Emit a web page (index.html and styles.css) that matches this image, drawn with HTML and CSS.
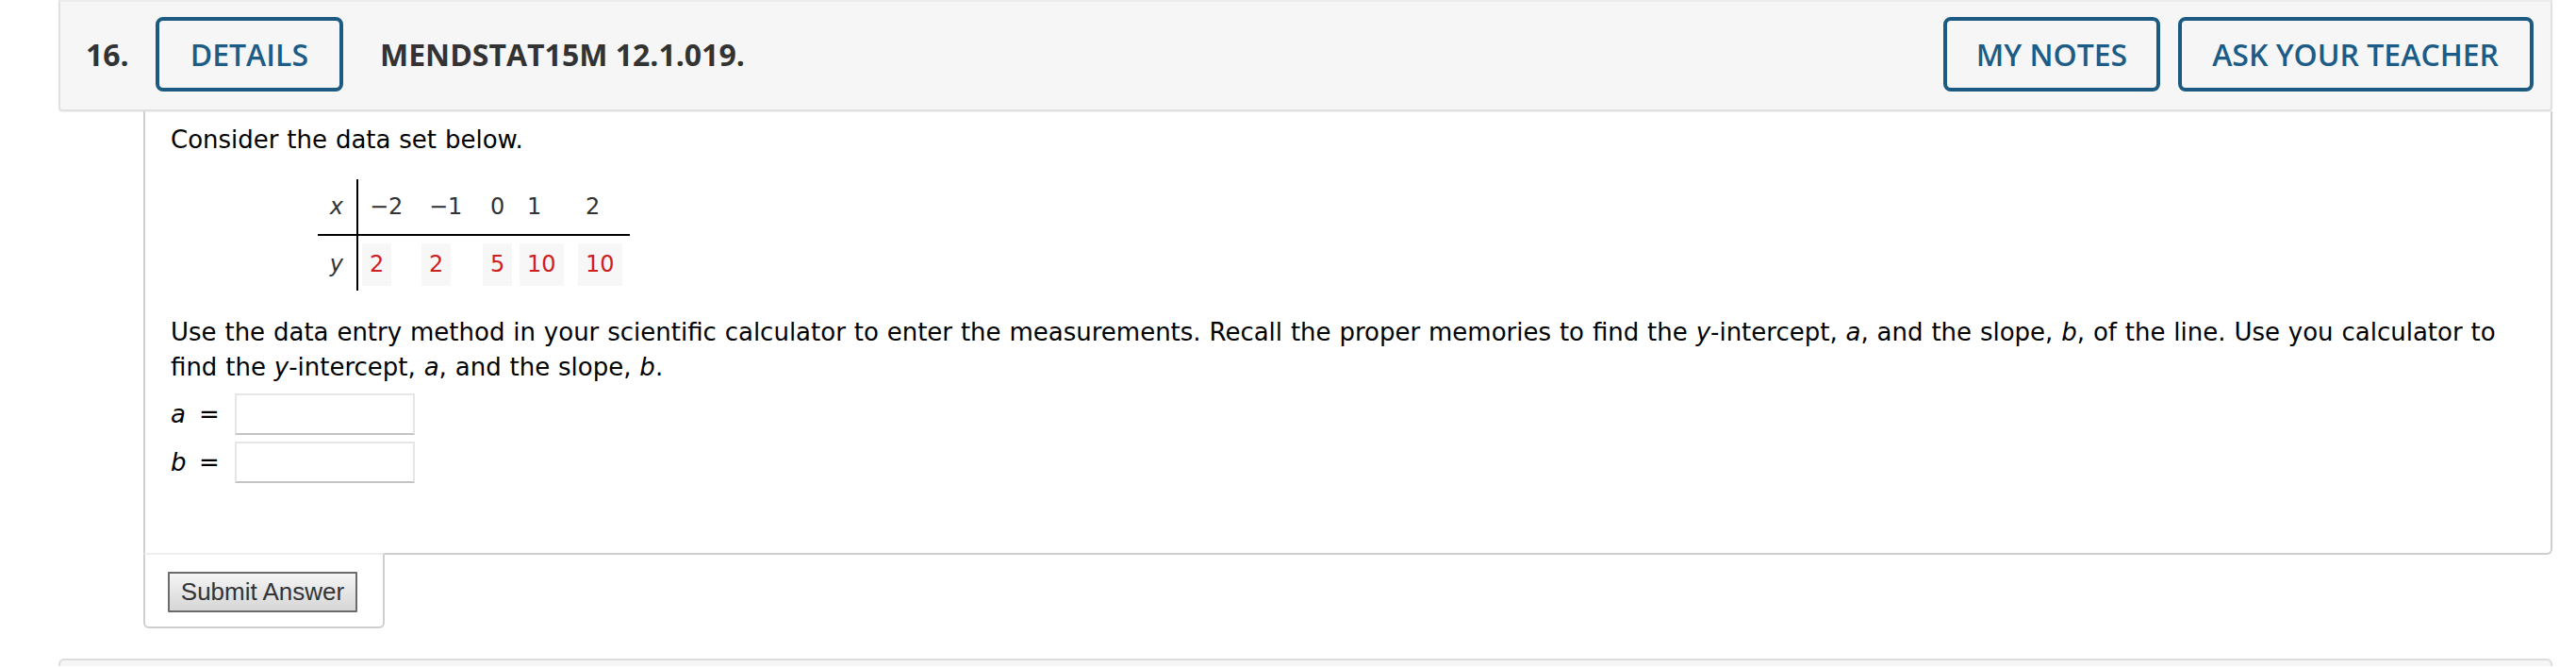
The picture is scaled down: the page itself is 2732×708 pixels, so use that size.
FILE: index.html
```html
<!DOCTYPE html>
<html lang="en">
<head>
<meta charset="utf-8">
<title>MENDSTAT15M 12.1.019.</title>
<link rel="stylesheet" href="styles.css">
</head>
<body>
<div class="page">
  <div class="qhead">
    <span class="qnum">16.</span>
    <button class="hbtn">DETAILS</button>
    <span class="qtitle">MENDSTAT15M 12.1.019.</span>
    <span class="spacer"></span>
    <button class="hbtn hbtn-notes">MY NOTES</button>
    <button class="hbtn hbtn-gap">ASK YOUR TEACHER</button>
  </div>
  <div class="qbody">
    <p class="intro">Consider the data set below.</p>
    <div class="dtable">
      <div class="lab top"><span class="v"><i>x</i></span></div>
      <div class="cell top c1"><span class="v">−2</span></div>
      <div class="cell top"><span class="v">−1</span></div>
      <div class="cell top"><span class="v">0</span></div>
      <div class="cell top"><span class="v">1</span></div>
      <div class="cell top"><span class="v">2</span></div>
      <div class="lab bot"><span class="v"><i>y</i></span></div>
      <div class="cell bot c1"><span class="v ans">2</span></div>
      <div class="cell bot"><span class="v ans">2</span></div>
      <div class="cell bot"><span class="v ans">5</span></div>
      <div class="cell bot"><span class="v ans">10</span></div>
      <div class="cell bot"><span class="v ans">10</span></div>
    </div>
    <p class="instr">Use the data entry method in your scientific calculator to enter the measurements. Recall the proper memories to find the <i>y</i>-intercept, <i>a</i>, and the slope, <i>b</i>, of the line. Use you calculator to find the <i>y</i>-intercept, <i>a</i>, and the slope, <i>b</i>.</p>
    <div class="ansrow"><span class="var"><i>a</i></span><span class="eq">=</span><input class="inp" type="text"></div>
    <div class="ansrow ansrow-2"><span class="var"><i>b</i></span><span class="eq">=</span><input class="inp" type="text"></div>
  </div>
  <div class="submit-tab"><button class="submit">Submit Answer</button></div>
  <div class="nextq"></div>
</div>
</body>
</html>
```
FILE: styles.css
```css
html, body {
  margin: 0;
  padding: 0;
  background: #ffffff;
  overflow: hidden;
}
body {
  font-family: "DejaVu Sans", Verdana, sans-serif;
  font-size: 26px;
  color: #000;
}
.page {
  padding: 0 25px 0 62px;
}

/* header */
.qhead {
  display: flex;
  align-items: center;
  background: #f6f6f6;
  border: 2px solid #e0e0e0;
  border-top-color: #ececec;
  border-radius: 0 0 4px 4px;
  padding: 16px 18px 19px 27px;
  font-family: "Open Sans", sans-serif;
  box-shadow: 0 1px 1px rgba(0,0,0,0.06);
}
.qnum {
  font-weight: 700;
  font-size: 32px;
  color: #333;
  margin-right: 28px;
}
.qtitle {
  margin-left: 39px;
  font-weight: 700;
  font-size: 32px;
  color: #333;
}
.spacer { flex: 1; }
.hbtn {
  font-family: "Open Sans", sans-serif;
  font-weight: 600;
  font-size: 32px;
  color: #1d5c86;
  background: transparent;
  border: 4px solid #1d5a82;
  border-radius: 8px;
  height: 79px;
  line-height: 71px;
  padding: 0 33px;
  box-sizing: border-box;
  margin: 0;
}
.hbtn-notes { padding: 0 31px; }
.hbtn-gap { margin-left: 19px; padding: 0 33px 0 32px; }

/* body */
.qbody {
  margin-left: 90px;
  border: 2px solid #cfcfcf;
  border-top: none;
  border-bottom-right-radius: 6px;
  padding: 12px 27px 74px 27px;
}
.intro {
  margin: 0;
  line-height: 37px;
  word-spacing: 0.6px;
}
.dtable {
  display: grid;
  grid-template-columns: 43px 67px 65px 39px 62px 55px;
  width: fit-content;
  margin: 23px 0 0 156px;
  font-size: 24px;
  color: #333;
}
.lab, .cell {
  display: flex;
  align-items: flex-start;
  box-sizing: border-box;
  padding-top: 7px;
  padding-bottom: 6px;
}
.lab {
  justify-content: flex-end;
  padding-right: 6px;
  border-right: 2px solid #000;
}
.bot {
  padding-top: 8px;
  padding-bottom: 5px;
}
.c1 { padding-left: 4px; }
.top { border-bottom: 2px solid #000; }
.v {
  display: block;
  padding: 8px;
  line-height: 29px;
}
.ans {
  color: #d0201e;
  background: #f7f7f7;
}
.instr {
  margin: 26px 0 0 0;
  line-height: 37px;
  word-spacing: 0.6px;
}
.ansrow {
  display: flex;
  align-items: center;
  margin-top: 9px;
}
.ansrow-2 { margin-top: 7px; }
.var {
  width: 30px;
}
.eq {
  width: 22px;
  margin-right: 16px;
}
.inp {
  width: 191px;
  height: 44px;
  box-sizing: border-box;
  border: 2px solid #e6e6e6;
  border-bottom-color: #c4c4c4;
  background: #fff;
  margin: 0;
  padding: 0 6px;
  font-size: 24px;
  font-family: "DejaVu Sans", sans-serif;
}

/* submit tab */
.submit-tab {
  margin: -2px 0 0 90px;
  width: fit-content;
  background: #fff;
  border: 2px solid #cfcfcf;
  border-top-color: #eeeeee;
  border-radius: 0 0 6px 6px;
  padding: 18px 27px 15px 24px;
}
.submit {
  display: block;
  width: 201px;
  height: 43px;
  box-sizing: border-box;
  padding: 0;
  margin: 0;
  font-family: "Liberation Sans", Arial, sans-serif;
  font-size: 26px;
  color: #333;
  border: 2px solid #6b6b6b;
  border-radius: 1px;
  background: linear-gradient(#f5f5f5, #d6d6d6);
}

/* next question header peek */
.nextq {
  margin-top: 32px;
  height: 6px;
  background: #f6f6f6;
  border: 2px solid #dcdcdc;
  border-bottom: none;
  border-radius: 6px 6px 0 0;
}
```
